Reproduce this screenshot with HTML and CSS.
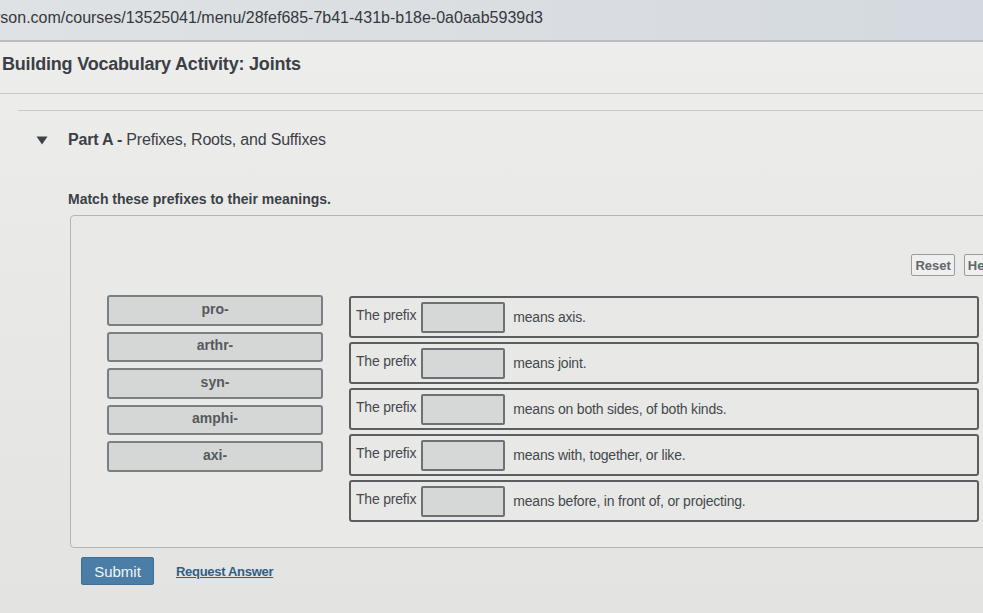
FILE: index.html
```html
<!DOCTYPE html>
<html lang="en">
<head>
<meta charset="utf-8">
<title>Building Vocabulary Activity: Joints</title>
<link rel="stylesheet" href="styles.css">
</head>
<body>
<div class="page">
  <div class="urlbar"><span class="url">rson.com/courses/13525041/menu/28fef685-7b41-431b-b18e-0a0aab5939d3</span></div>
  <h1 class="title">Building Vocabulary Activity: Joints</h1>
  <div class="rule rule-a"></div>
  <div class="rule rule-b"></div>
  <section class="part">
    <div class="part-head">
      <svg class="caret" width="12" height="9" viewBox="0 0 12 9"><path d="M0.5 0.5 H11.5 L6 8.5 Z" fill="#3d4248"/></svg>
      <span class="part-label"><b>Part A -</b> Prefixes, Roots, and Suffixes</span>
    </div>
    <p class="prompt">Match these prefixes to their meanings.</p>
    <div class="activity">
      <div class="toolbar">
        <button class="tool">Reset</button>
        <button class="tool">Help</button>
      </div>
      <div class="match">
        <div class="tiles">
          <div class="tile">pro-</div>
          <div class="tile">arthr-</div>
          <div class="tile">syn-</div>
          <div class="tile">amphi-</div>
          <div class="tile">axi-</div>
        </div>
        <div class="rows">
          <div class="row"><span class="lead">The prefix</span><span class="drop"></span><span class="meaning">means axis.</span></div>
          <div class="row"><span class="lead">The prefix</span><span class="drop"></span><span class="meaning">means joint.</span></div>
          <div class="row"><span class="lead">The prefix</span><span class="drop"></span><span class="meaning">means on both sides, of both kinds.</span></div>
          <div class="row"><span class="lead">The prefix</span><span class="drop"></span><span class="meaning">means with, together, or like.</span></div>
          <div class="row"><span class="lead">The prefix</span><span class="drop"></span><span class="meaning">means before, in front of, or projecting.</span></div>
        </div>
      </div>
    </div>
    <div class="actions">
      <button class="submit">Submit</button>
      <a class="request" href="#">Request Answer</a>
    </div>
  </section>
</div>
</body>
</html>
```

FILE: styles.css
```css
html, body {
  margin: 0;
  padding: 0;
}
body {
  width: 983px;
  height: 613px;
  overflow: hidden;
  background: #e5e6e4;
  font-family: "Liberation Sans", Arial, sans-serif;
  color: #3d4248;
}
.page {
  width: 1010px;
  background: linear-gradient(180deg, #eeeeed 0%, #e9eae8 40%, #e3e4e2 100%);
  min-height: 613px;
}
.urlbar {
  height: 42px;
  background: linear-gradient(90deg, #dfe2e4 0%, #d9dde1 60%, #d3d9df 100%);
  border-bottom: 2px solid #b9bcbe;
  box-sizing: border-box;
  padding-top: 9px;
  overflow: hidden;
}
.url {
  display: block;
  margin-left: -5px;
  font-size: 16px;
  color: #35393d;
  white-space: nowrap;
}
.title {
  margin: 0;
  box-sizing: border-box;
  padding: 12px 0 0 2px;
  height: 51px;
  font-size: 18px;
  font-weight: bold;
  color: #3b4046;
  letter-spacing: -0.2px;
}
.rule {
  height: 0;
  border-top: 1px solid #c9cbcb;
}
.rule-a {
  margin: 0;
}
.rule-b {
  margin: 16px 0 0 18px;
}
.part {
  padding: 0 0 0 36px;
}
.part-head {
  display: flex;
  align-items: center;
  gap: 20px;
  height: 30px;
  margin-top: 14px;
}
.caret {
  display: block;
}
.part-label {
  font-size: 16px;
  color: #3b4046;
  letter-spacing: -0.2px;
}
.prompt {
  margin: 36px 0 0 32px;
  font-size: 14px;
  font-weight: bold;
  color: #3b4046;
}
.activity {
  margin: 8px 0 0 34px;
  width: 940px;
  height: 333px;
  box-sizing: border-box;
  border: 1px solid #b3b5b5;
  border-radius: 4px;
  background: #e9eae8;
  padding: 38px 0 0 36px;
}
.toolbar {
  display: flex;
  justify-content: flex-end;
  gap: 9px;
  padding-right: 9px;
  height: 22px;
}
.tool {
  height: 22px;
  box-sizing: border-box;
  padding: 0 3px;
  border: 1px solid #9a9c9d;
  border-radius: 2px;
  background: #eeefee;
  font-family: "Liberation Sans", Arial, sans-serif;
  font-size: 13px;
  font-weight: bold;
  color: #62666a;
}
.match {
  display: flex;
  align-items: flex-start;
  gap: 26px;
  margin-top: 19px;
}
.tiles {
  display: flex;
  flex-direction: column;
  gap: 6px;
  width: 216px;
}
.tile {
  height: 30.5px;
  box-sizing: border-box;
  border: 2px solid #7c7f81;
  border-radius: 3px;
  background: #d5d7d6;
  display: flex;
  align-items: center;
  justify-content: center;
  font-size: 14px;
  font-weight: bold;
  color: #55595d;
  padding-bottom: 3px;
}
.rows {
  display: flex;
  flex-direction: column;
  gap: 4px;
  width: 630px;
  margin-top: 1px;
}
.row {
  height: 42px;
  box-sizing: border-box;
  border: 2px solid #5a5e61;
  border-radius: 3px;
  background: #e8e9e7;
  display: flex;
  align-items: center;
  padding-left: 5px;
  font-size: 14px;
  color: #44484c;
  letter-spacing: -0.2px;
}
.lead {
  margin-top: -4px;
}
.drop {
  width: 84px;
  height: 31px;
  box-sizing: border-box;
  margin-left: 5px;
  border: 2px solid #6d7174;
  border-radius: 2px;
  background: #d6d8d7;
}
.meaning {
  margin-left: 8px;
}
.actions {
  display: flex;
  align-items: center;
  gap: 22px;
  margin: 9px 0 0 45px;
}
.submit {
  width: 73px;
  height: 28px;
  border: 1px solid #3f6f94;
  border-radius: 2px;
  background: #4a7ea6;
  color: #f2f5f8;
  font-family: "Liberation Sans", Arial, sans-serif;
  font-size: 15px;
  padding: 0;
}
.request {
  font-size: 13px;
  font-weight: bold;
  color: #2f5f86;
  text-decoration: underline;
  letter-spacing: -0.3px;
}
```
